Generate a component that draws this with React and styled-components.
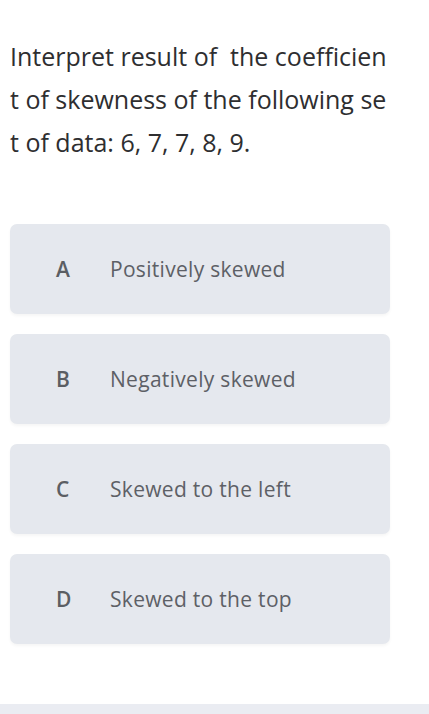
import React from "react";
import styled, { createGlobalStyle } from "styled-components";

const Global = createGlobalStyle`
  html, body { margin: 0; padding: 0; background: #ffffff; }
  body { font-family: "Open Sans", Lato, sans-serif; }
`;

const Page = styled.div`
  width: 429px;
  height: 714px;
  display: flex;
  flex-direction: column;
  background: #ffffff;
  overflow: hidden;
`;

const Question = styled.div`
  padding: 35px 10px 0 10px;
  font-size: 25px;
  line-height: 43px;
  color: #2e2e30;
`;

const Line = styled.div`
  white-space: nowrap;
`;

const Options = styled.div`
  display: flex;
  flex-direction: column;
  gap: 20px;
  padding: 60px 39px 0 10px;
  flex: 1;
`;

const Option = styled.div`
  height: 90px;
  border-radius: 7px;
  background: #e5e8ee;
  box-shadow: 0 2px 3px rgba(0, 0, 0, 0.04);
  display: flex;
  align-items: center;
`;

const Letter = styled.span`
  width: 100px;
  padding-left: 46px;
  box-sizing: border-box;
  font-size: 21px;
  font-weight: 600;
  color: #5b5e63;
`;

const Label = styled.span`
  font-size: 21px;
  color: #5d6066;
  letter-spacing: 0.3px;
`;

const BottomBar = styled.div`
  height: 10px;
  background: #eaecf2;
`;

const options = [
  ["A", "Positively skewed"],
  ["B", "Negatively skewed"],
  ["C", "Skewed to the left"],
  ["D", "Skewed to the top"],
];

const lines = [
  "Interpret result of\u00a0 the coefficien",
  "t of skewness of the following se",
  "t of data: 6, 7, 7, 8, 9.",
];

export default function App() {
  return (
    <Page>
      <Global />
      <Question>
        {lines.map((l) => (
          <Line key={l}>{l}</Line>
        ))}
      </Question>
      <Options>
        {options.map(([l, t]) => (
          <Option key={l}>
            <Letter>{l}</Letter>
            <Label>{t}</Label>
          </Option>
        ))}
      </Options>
      <BottomBar />
    </Page>
  );
}
